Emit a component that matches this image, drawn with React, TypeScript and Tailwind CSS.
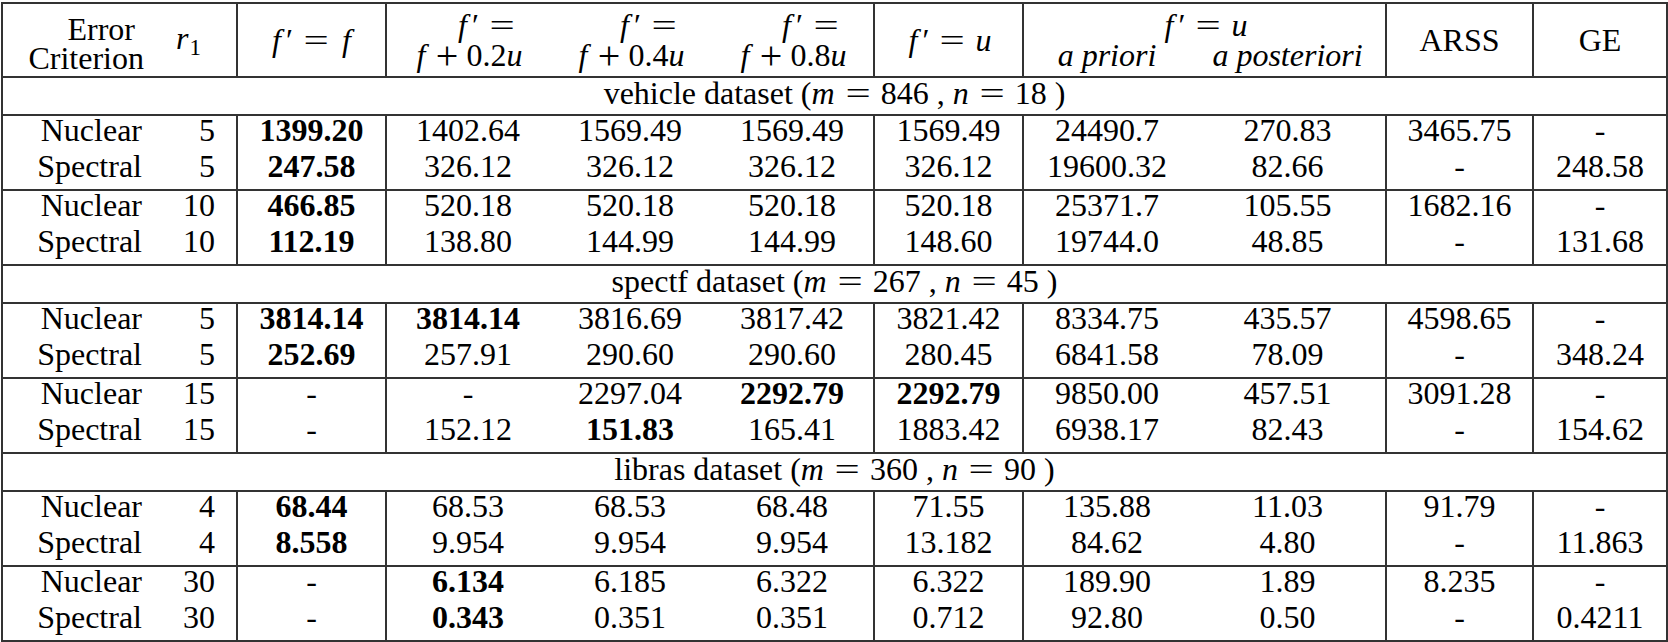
import { ReactNode } from 'react'
import { clsx } from 'clsx'

type Row = { crit: string; r: string; vals: string[]; bold: number[] }
type Section = { name: string; m: string; n: string; groups: Row[][] }

const sections: Section[] = [
  {
    name: 'vehicle',
    m: '846',
    n: '18',
    groups: [
      [
        { crit: 'Nuclear', r: '5', vals: ['1399.20', '1402.64', '1569.49', '1569.49', '1569.49', '24490.7', '270.83', '3465.75', '-'], bold: [0] },
        { crit: 'Spectral', r: '5', vals: ['247.58', '326.12', '326.12', '326.12', '326.12', '19600.32', '82.66', '-', '248.58'], bold: [0] },
      ],
      [
        { crit: 'Nuclear', r: '10', vals: ['466.85', '520.18', '520.18', '520.18', '520.18', '25371.7', '105.55', '1682.16', '-'], bold: [0] },
        { crit: 'Spectral', r: '10', vals: ['112.19', '138.80', '144.99', '144.99', '148.60', '19744.0', '48.85', '-', '131.68'], bold: [0] },
      ],
    ],
  },
  {
    name: 'spectf',
    m: '267',
    n: '45',
    groups: [
      [
        { crit: 'Nuclear', r: '5', vals: ['3814.14', '3814.14', '3816.69', '3817.42', '3821.42', '8334.75', '435.57', '4598.65', '-'], bold: [0, 1] },
        { crit: 'Spectral', r: '5', vals: ['252.69', '257.91', '290.60', '290.60', '280.45', '6841.58', '78.09', '-', '348.24'], bold: [0] },
      ],
      [
        { crit: 'Nuclear', r: '15', vals: ['-', '-', '2297.04', '2292.79', '2292.79', '9850.00', '457.51', '3091.28', '-'], bold: [3, 4] },
        { crit: 'Spectral', r: '15', vals: ['-', '152.12', '151.83', '165.41', '1883.42', '6938.17', '82.43', '-', '154.62'], bold: [2] },
      ],
    ],
  },
  {
    name: 'libras',
    m: '360',
    n: '90',
    groups: [
      [
        { crit: 'Nuclear', r: '4', vals: ['68.44', '68.53', '68.53', '68.48', '71.55', '135.88', '11.03', '91.79', '-'], bold: [0] },
        { crit: 'Spectral', r: '4', vals: ['8.558', '9.954', '9.954', '9.954', '13.182', '84.62', '4.80', '-', '11.863'], bold: [0] },
      ],
      [
        { crit: 'Nuclear', r: '30', vals: ['-', '6.134', '6.185', '6.322', '6.322', '189.90', '1.89', '8.235', '-'], bold: [1] },
        { crit: 'Spectral', r: '30', vals: ['-', '0.343', '0.351', '0.351', '0.712', '92.80', '0.50', '-', '0.4211'], bold: [1] },
      ],
    ],
  },
]

// one entry per value column (f'=f ... GE); vertical rules sit between column groups
const valCls = [
  'border-l-2 border-l-[#333]',
  'border-l-2 border-l-[#333]',
  '',
  '',
  'border-l-2 border-l-[#333]',
  'border-l-2 border-l-[#333]',
  '',
  'border-l-2 border-l-[#333]',
  'border-l-2 border-l-[#333]',
]

const I = ({ children }: { children: ReactNode }) => <i className="inline-block">{children}</i>
// math italic f is wider in computer modern
const F = () => <i className="inline-block px-[3px]">f</i>
// math relations/operators: widen the glyph a bit, like computer modern
const Rel = ({ children, tight }: { children: ReactNode; tight?: boolean }) => (
  <span className={clsx('inline-block scale-x-[1.4]', tight ? 'ml-[14px]' : 'mx-[14px]')}>{children}</span>
)
const Bin = ({ children }: { children: ReactNode }) => (
  <span className="mx-[10px] inline-block scale-[1.25]">{children}</span>
)

const FPrime = () => (
  <span className="inline-block">
    <F />
    <span className="ml-[2px] inline-block">′</span>
  </span>
)

function TwoLine({ n }: { n: string }) {
  return (
    <div className="flex flex-col items-center leading-[30px]">
      <div className="h-[30px] pl-[30px]">
        <FPrime />
        <Rel tight>=</Rel>
      </div>
      <div className="h-[30px]">
        <F />
        <Bin>+</Bin>
        <span className="inline-block">{n}</span>
        <I>u</I>
      </div>
    </div>
  )
}

export default function App() {
  return (
    <div className="min-h-screen bg-white pl-[1px] pt-[2px] font-['Liberation_Serif',serif] text-[32px] text-black">
      <table className="w-[1665px] table-fixed border-collapse border-2 border-[#333] text-[32px]">
        <colgroup>
          <col className="w-[161px]" />
          <col className="w-[74px]" />
          <col className="w-[149px]" />
          <col className="w-[163px]" />
          <col className="w-[162px]" />
          <col className="w-[163px]" />
          <col className="w-[149px]" />
          <col className="w-[167px]" />
          <col className="w-[196px]" />
          <col className="w-[147px]" />
          <col className="w-[134px]" />
        </colgroup>
        <thead>
          <tr className="h-[37px]">
            <th rowSpan={2} className="border-b-2 border-b-[#333] p-0 pr-[19px] pt-[7px] font-normal">
              <div className="flex flex-col items-end leading-[29px]">
                <span className="mr-[9px] block h-[29px]">Error</span>
                <span className="block h-[29px]">Criterion</span>
              </div>
            </th>
            <th rowSpan={2} className="border-b-2 border-b-[#333] p-0 pr-[35px] text-right font-normal leading-[30px]">
              <I>r</I>
              <span className="ml-[1px] inline-block translate-y-[6px] text-[23px]">1</span>
            </th>
            <th rowSpan={2} className="border-b-2 border-l-2 border-[#333] p-0 font-normal leading-[30px]">
              <FPrime />
              <Rel>=</Rel>
              <F />
            </th>
            <th rowSpan={2} className="border-b-2 border-l-2 border-[#333] p-0 font-normal">
              <TwoLine n="0.2" />
            </th>
            <th rowSpan={2} className="border-b-2 border-[#333] p-0 font-normal">
              <TwoLine n="0.4" />
            </th>
            <th rowSpan={2} className="border-b-2 border-[#333] p-0 font-normal">
              <TwoLine n="0.8" />
            </th>
            <th rowSpan={2} className="border-b-2 border-l-2 border-[#333] p-0 font-normal leading-[30px]">
              <FPrime />
              <Rel>=</Rel>
              <I>u</I>
            </th>
            <th colSpan={2} className="border-l-2 border-[#333] p-0 pt-[4px] align-bottom font-normal leading-[30px]">
              <FPrime />
              <Rel>=</Rel>
              <I>u</I>
            </th>
            <th rowSpan={2} className="border-b-2 border-l-2 border-[#333] p-0 font-normal">
              ARSS
            </th>
            <th rowSpan={2} className="border-b-2 border-l-2 border-[#333] p-0 font-normal">
              GE
            </th>
          </tr>
          <tr className="h-[37px]">
            <th className="border-b-2 border-l-2 border-[#333] p-0 pb-[4px] align-top font-normal italic leading-[30px]">
              a priori
            </th>
            <th className="border-b-2 border-[#333] p-0 pb-[4px] align-top font-normal italic leading-[30px]">
              a posteriori
            </th>
          </tr>
        </thead>
        <tbody>
          {sections.map((s) => (
            <Block key={s.name} section={s} />
          ))}
        </tbody>
      </table>
    </div>
  )
}

function Block({ section }: { section: Section }) {
  const { name, m, n, groups } = section
  return (
    <>
      <tr className="h-[38px]">
        <td colSpan={11} className="border-b-2 border-[#333] p-0 text-center align-top leading-[30px]">
          {name} dataset (<I>m</I>
          <Rel>=</Rel>
          {m} , <I>n</I>
          <Rel>=</Rel>
          {n} )
        </td>
      </tr>
      {groups.map((g, gi) =>
        g.map((row, ri) => {
          const last = ri === g.length - 1
          return (
            <tr key={`${gi}-${ri}`} className={ri === 0 ? 'h-[37px]' : 'h-[38px]'}>
              <td className={clsx('p-0 pr-[21px] text-right align-top leading-[28px]', last && 'border-b-2 border-b-[#333]')}>{row.crit}</td>
              <td className={clsx('p-0 pr-[21px] text-right align-top leading-[28px]', last && 'border-b-2 border-b-[#333]')}>{row.r}</td>
              {row.vals.map((v, vi) => (
                <td
                  key={vi}
                  className={clsx(
                    'p-0 text-center align-top leading-[28px]',
                    valCls[vi],
                    row.bold.includes(vi) && 'font-bold',
                    last && 'border-b-2 border-b-[#333]'
                  )}
                >
                  {v}
                </td>
              ))}
            </tr>
          )
        })
      )}
    </>
  )
}
